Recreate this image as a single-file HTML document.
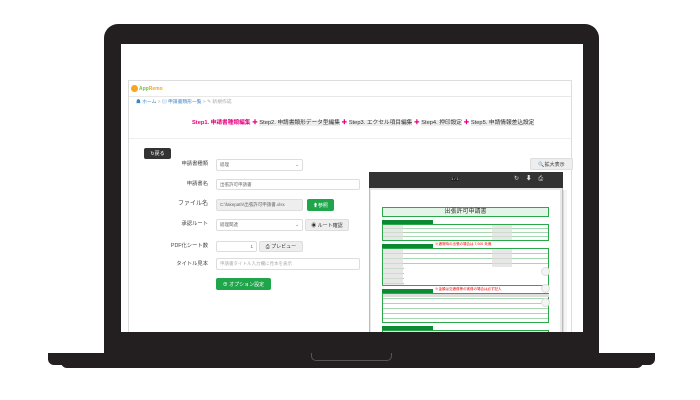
<!DOCTYPE html>
<html><head><meta charset="utf-8"><style>
*{margin:0;padding:0;box-sizing:border-box}
body{width:700px;height:400px;background:#fff;position:relative;overflow:hidden;font-family:"Liberation Sans","Noto Sans CJK JP",sans-serif;color:#444}
.a{position:absolute}
.lid{left:104px;top:24px;width:495px;height:330px;background:#231f20;border-radius:14px 14px 0 0}
.scr{left:121px;top:44px;width:462px;height:288px;background:#fff;overflow:hidden}
.base{left:48px;top:353px;width:607px;height:12px;background:#231f20;border-radius:0 0 6px 6px}
.base2{left:61px;top:362px;width:582px;height:6px;background:#231f20;border-radius:0 0 6px 6px}
.notch{left:311px;top:353px;width:81px;height:8px;border:1px solid #555;border-top:none;border-radius:0 0 5px 5px}
.t{font-size:5.3px;white-space:nowrap;line-height:1}
.in{background:#fff;border:1px solid #ddd;border-radius:2px;font-size:4.5px;color:#666;padding:0 3px;display:flex;align-items:center}
.btn{border-radius:2px;font-size:5px;display:flex;align-items:center;justify-content:center;white-space:nowrap}
.g{background:#1fa54a;color:#fff}
.gr{background:#eee;border:1px solid #ddd;color:#333}
.gb{border:1px solid #2aa84a}
.hd{background:#0b8a34;height:4px}
</style></head><body>
<div class="a lid"></div>
<div class="a base"></div><div class="a base2"></div><div class="a notch"></div>
<div class="a scr">
 <div class="a" style="left:7px;top:36px;width:444px;height:260px;border:1px solid #ddd;border-bottom:none"></div>
 <div class="a" style="left:8px;top:52px;width:442px;height:1px;background:#e8e8e8"></div>
 <div class="a" style="left:10px;top:41px;width:7px;height:7px;border-radius:50%;background:#f5a623"></div>
 <div class="a t" style="left:18px;top:43px;font-weight:bold;font-size:5px"><span style="color:#7bc043">App</span><span style="color:#f5a623">Remo</span></div>
 <div class="a t" style="left:15px;top:57px;font-size:4.8px;color:#3a86c8">☗ ホーム <span style="color:#aaa">&gt;</span> ▤ 申請書類形一覧 <span style="color:#aaa">&gt; ✎ 新規作成</span></div>
 <div class="a t" style="left:71px;top:77px;font-size:5.7px;color:#333"><b style="color:#e6007e">Step1. 申請書種類編集</b> <span style="color:#e6007e">✚</span> <span style="background:#eee">Step2. 申請書類形データ型編集</span> <span style="color:#e6007e">✚</span> <span style="background:#eee">Step3. エクセル項目編集</span> <span style="color:#e6007e">✚</span> <span style="background:#eee">Step4. 押印設定</span> <span style="color:#e6007e">✚</span> <span style="background:#eee">Step5. 申請情報差込設定</span></div>
 <div class="a" style="left:8px;top:94px;width:442px;height:1px;background:#eee"></div>
 <div class="a btn" style="left:23px;top:104px;width:27px;height:11px;background:#333;color:#fff">↻戻る</div>
 <div class="a t" style="left:35px;top:118px;width:52px;text-align:right">申請書種類</div>
 <div class="a in" style="left:95px;top:115px;width:87px;height:12px">経理<span style="margin-left:auto">⌄</span></div>
 <div class="a t" style="left:35px;top:138px;width:52px;text-align:right">申請書名</div>
 <div class="a in" style="left:95px;top:135px;width:144px;height:11px">出張許可申請書</div>
 <div class="a t" style="left:35px;top:157px;width:52px;text-align:right;font-size:6px">ファイル名</div>
 <div class="a in" style="left:95px;top:155px;width:87px;height:12px;background:#eee">C:\fakepath\出張許可申請書.xlsx</div>
 <div class="a btn g" style="left:186px;top:155px;width:27px;height:12px">⬆参照</div>
 <div class="a t" style="left:35px;top:178px;width:52px;text-align:right">承認ルート</div>
 <div class="a in" style="left:95px;top:175px;width:87px;height:12px">経理関連<span style="margin-left:auto">⌄</span></div>
 <div class="a btn gr" style="left:184px;top:175px;width:44px;height:12px">◉ ルート確認</div>
 <div class="a t" style="left:30px;top:200px;width:57px;text-align:right">PDF化シート数</div>
 <div class="a in" style="left:95px;top:197px;width:41px;height:11px;justify-content:flex-end">1</div>
 <div class="a btn gr" style="left:138px;top:197px;width:44px;height:11px">⎙ プレビュー</div>
 <div class="a t" style="left:35px;top:218px;width:52px;text-align:right">タイトル見本</div>
 <div class="a in" style="left:95px;top:214px;width:144px;height:12px;color:#aaa">申請書タイトル入力欄に見本を表示</div>
 <div class="a btn g" style="left:95px;top:234px;width:55px;height:12px">⊕ オプション設定</div>
 <div class="a btn gr" style="left:409px;top:114px;width:43px;height:12px">🔍拡大表示</div>
 <div class="a" style="left:248px;top:128px;width:194px;height:170px;background:#e8e8e8;border:1px solid #bbb"></div>
 <div class="a" style="left:248px;top:128px;width:194px;height:16px;background:#333"></div>
 <div class="a t" style="left:330px;top:133px;color:#ddd;font-size:4px;background:#222">1 / 1</div>
 <div class="a t" style="left:393px;top:132px;color:#ddd;font-size:6px">↻&nbsp;&nbsp;&nbsp;&nbsp;⬇&nbsp;&nbsp;&nbsp;&nbsp;⎙</div>
 <div class="a" style="left:250px;top:146px;width:189px;height:150px;background:#fff"></div>
 <div class="a" style="left:442px;top:146px;width:4px;height:150px;background:#f4f4f4;border-left:1px solid #ddd"></div>
 <div class="a gb" style="left:261px;top:163px;width:167px;height:10px;background:#e3f5e6;font-size:6px;text-align:center;line-height:8px;color:#333">出張許可申請書</div>
 <div class="a hd" style="left:261px;top:176px;width:51px"></div>
 <div class="a gb" style="left:261px;top:180px;width:167px;height:17px;background:repeating-linear-gradient(#fff 0 3px,#a7d7b0 3px 4px)"></div>
 <div class="a" style="left:262px;top:181px;width:20px;height:15px;background:#ddd;opacity:.7"></div>
 <div class="a" style="left:371px;top:181px;width:20px;height:15px;background:#ddd;opacity:.7"></div>
 <div class="a hd" style="left:261px;top:200px;width:51px"></div>
 <div class="a t" style="left:314px;top:199px;color:#e00;font-size:3.5px">※通常時の出張の場合は 7,000 未満</div>
 <div class="a gb" style="left:261px;top:204px;width:167px;height:38px;background:repeating-linear-gradient(#fff 0 4px,#a7d7b0 4px 5px)"></div>
 <div class="a" style="left:262px;top:205px;width:20px;height:36px;background:#ddd;opacity:.7"></div>
 <div class="a" style="left:371px;top:205px;width:20px;height:18px;background:#ddd;opacity:.7"></div>
 <div class="a" style="left:283px;top:224px;width:144px;height:17px;background:#fff"></div>
 <div class="a hd" style="left:261px;top:245px;width:51px"></div>
 <div class="a t" style="left:314px;top:244px;color:#e00;font-size:3.5px">※金額は交通費等の実費の場合は必ず記入</div>
 <div class="a gb" style="left:261px;top:249px;width:167px;height:30px;background:repeating-linear-gradient(#fff 0 4px,#a7d7b0 4px 5px)"></div>
 <div class="a" style="left:262px;top:250px;width:166px;height:3px;background:#ddd"></div>
 <div class="a hd" style="left:261px;top:282px;width:51px"></div>
 <div class="a gb" style="left:261px;top:286px;width:167px;height:10px;background:#e5e5e5"></div>
 <div class="a" style="left:420px;top:223px;width:9px;height:9px;border-radius:50%;background:#f3f3f3;border:1px solid #ddd"></div>
 <div class="a" style="left:420px;top:240px;width:9px;height:9px;border-radius:50%;background:#f3f3f3;border:1px solid #ddd"></div>
 <div class="a" style="left:420px;top:254px;width:9px;height:9px;border-radius:50%;background:#f3f3f3;border:1px solid #ddd"></div>
</div>
</body></html>
